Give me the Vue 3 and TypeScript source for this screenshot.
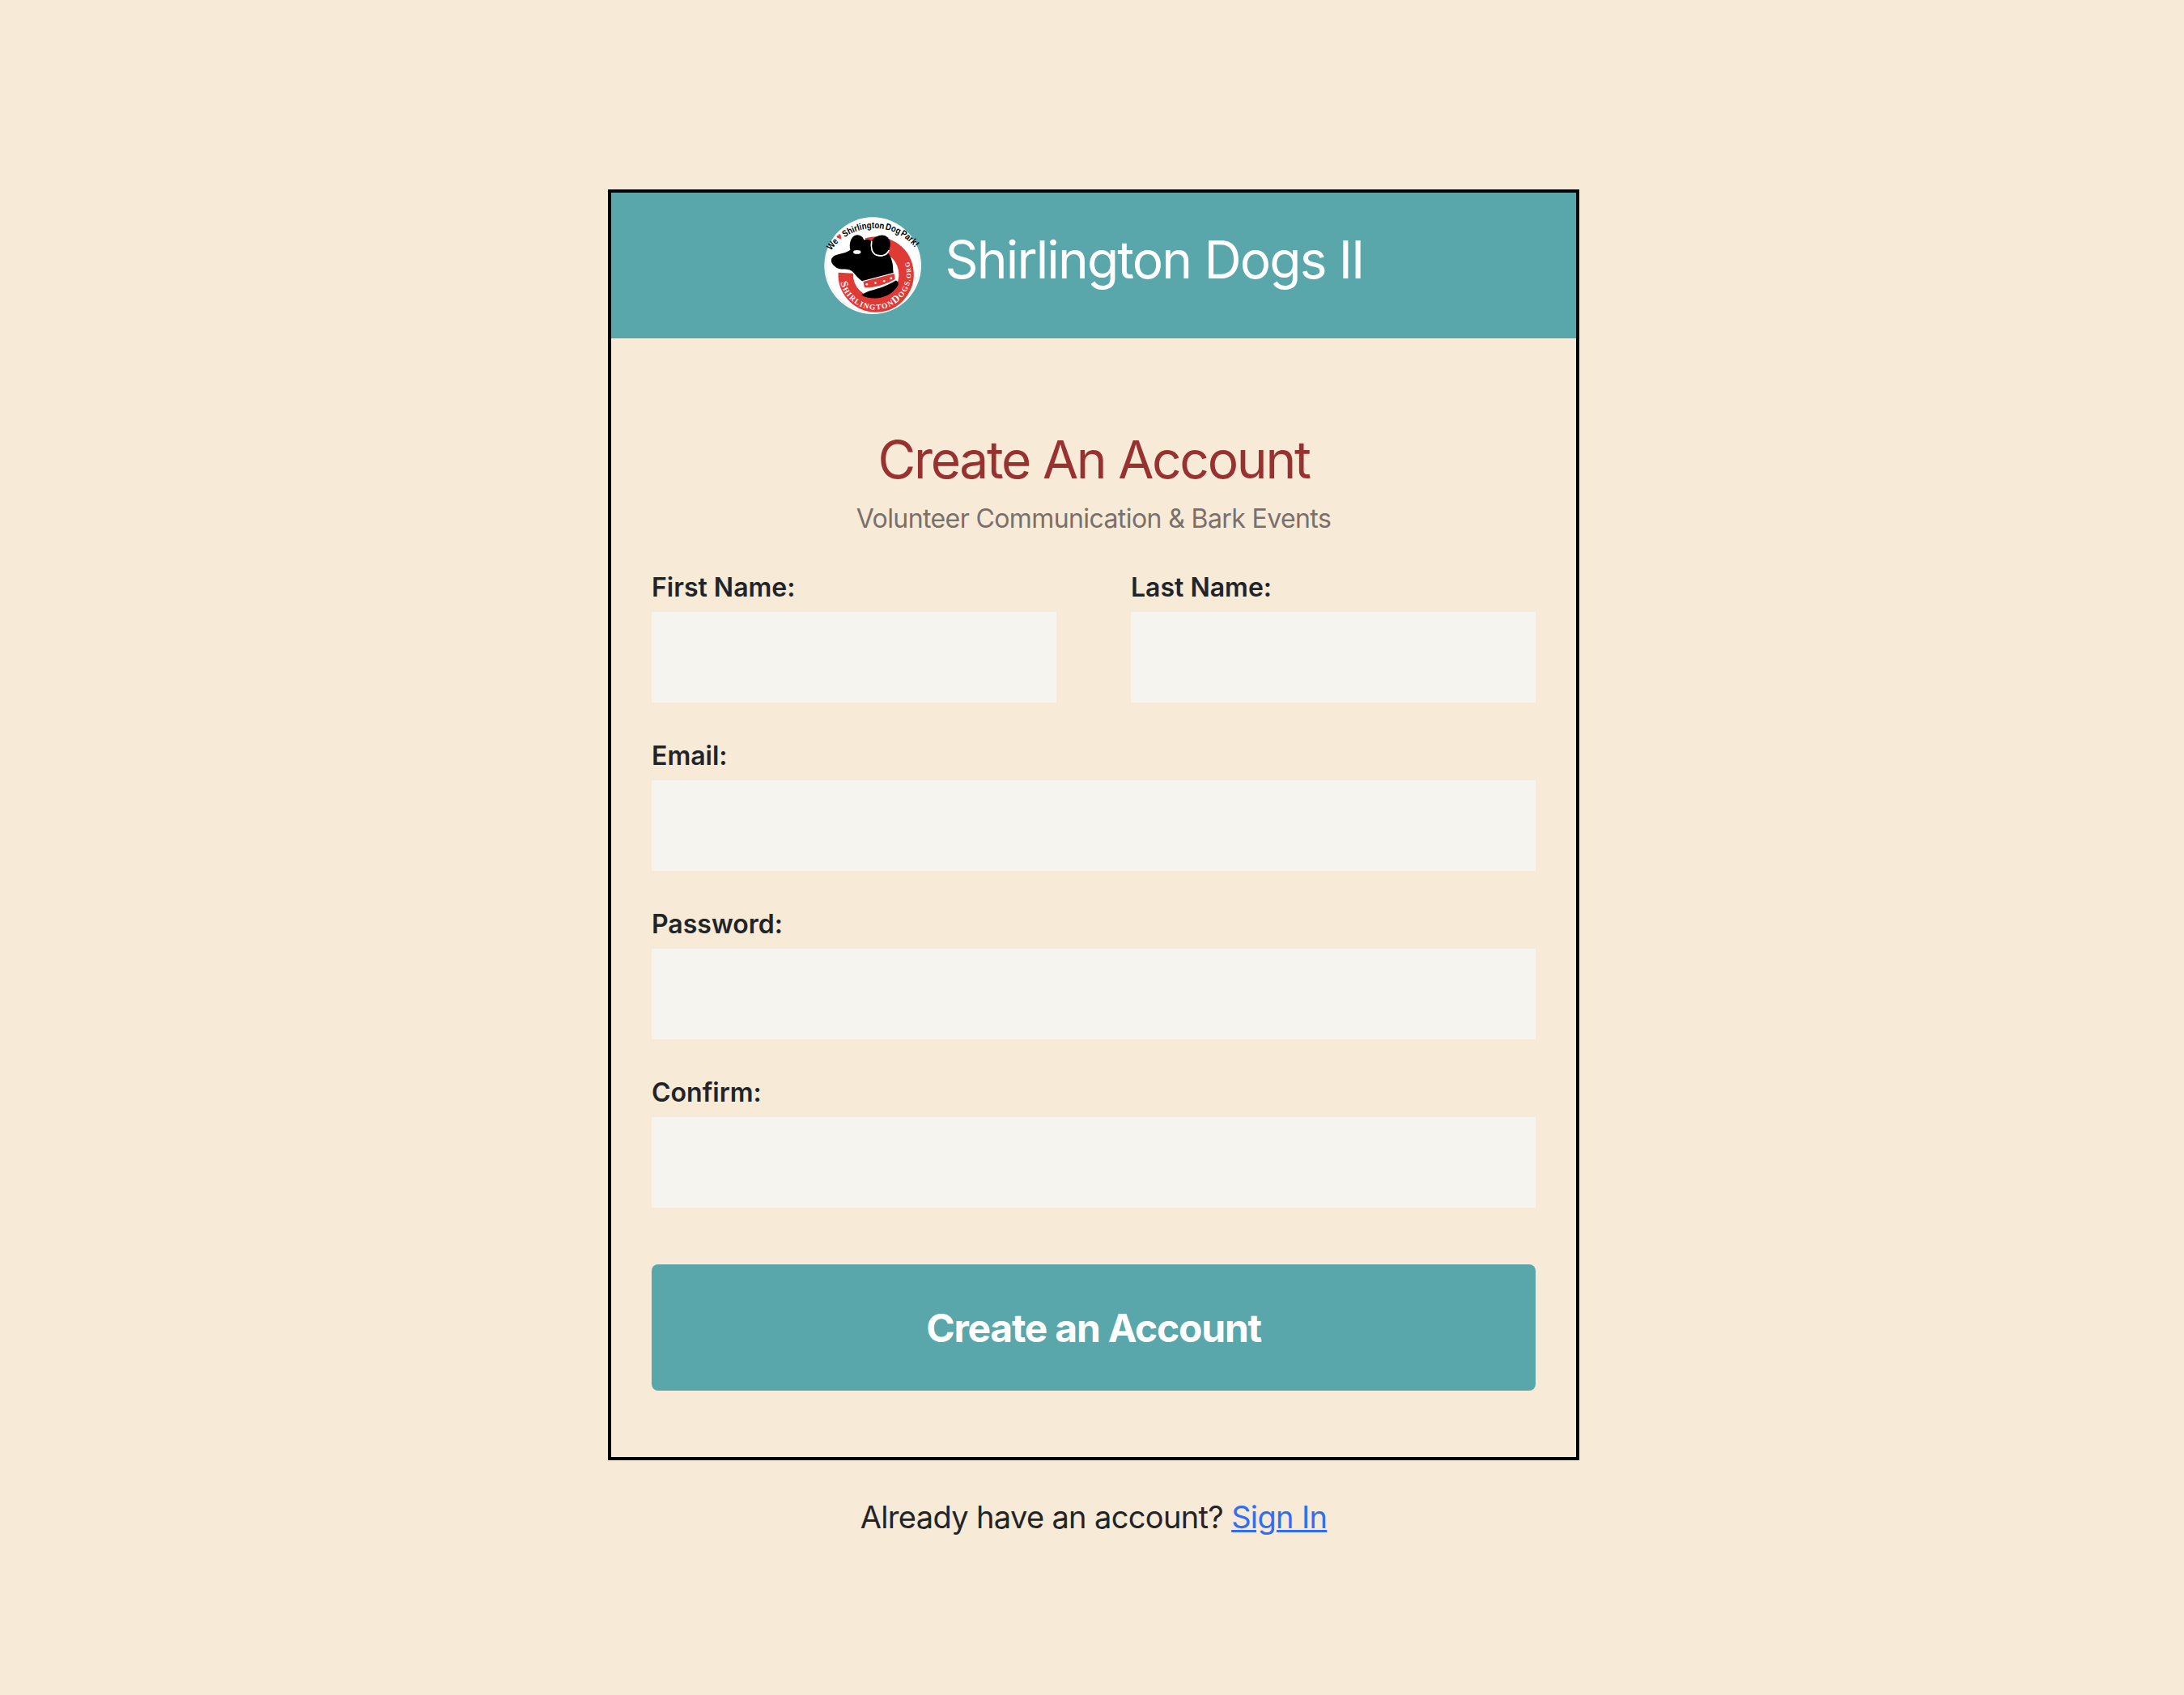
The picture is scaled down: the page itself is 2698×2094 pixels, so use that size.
<script setup lang="ts">
const nameFields: string[] = ['First Name:', 'Last Name:']
const wideFields: string[] = ['Email:', 'Password:', 'Confirm:']
</script>

<template>
  <main class="page">
    <section class="card">
      <header class="banner">
        <svg class="logo" viewBox="110 83 362 362" aria-label="Shirlington Dogs logo">
          <defs>
            <path id="topArc" d="M136 207 A195 195 0 0 1 454 207" />
            <path id="bottomArc" d="M171 325 A132 132 0 1 0 422 245" />
          </defs>
          <circle cx="290" cy="263" r="179" fill="#fff" />
          <path d="M122 222 A173 173 0 1 0 458 222" fill="none" stroke="#d8d8d8" stroke-width="1.5" />
          <path d="M190 290 A112 112 0 1 0 270 188" fill="none" stroke="#de3a36" stroke-width="55" />
          <text class="logo-top">
            <textPath href="#topArc" textLength="358" lengthAdjust="spacingAndGlyphs">We <tspan class="logo-heart">♥</tspan> Shirlington Dog Park!</textPath>
          </text>
          <text class="logo-bottom">
            <textPath href="#bottomArc" textLength="428" lengthAdjust="spacing"><tspan class="logo-cap">S</tspan>HIRLINGTON<tspan class="logo-cap">D</tspan>OGS<tspan class="logo-small">.ORG</tspan></textPath>
          </text>
          <path
            d="M137 240 C140 230 150 224 168 220 C185 216 198 212 207 205 C203 190 205 172 214 160 C222 146 242 146 252 158 L258 168 C270 166 278 166 285 172 C283 190 285 212 298 222 C312 232 335 230 348 218 C358 232 366 255 365 280 L367 292 L253 322 C238 312 228 300 220 290 C212 280 200 276 185 276 C170 276 158 274 150 266 C140 258 135 250 137 240 Z"
            fill="#000"
          />
          <path
            d="M286 172 C296 156 318 146 335 152 C352 160 358 178 353 196 C348 212 340 224 325 226 C308 228 292 222 287 206 C284 195 284 182 286 172 Z"
            fill="#000"
          />
          <path d="M286 172 C284 182 284 195 287 206 C292 222 308 228 325 226 C337 224 345 216 350 206" fill="none" stroke="#fff" stroke-width="5" />
          <ellipse cx="232" cy="213" rx="14" ry="7" fill="#fff" />
          <path d="M253 321 L370 290 L374 314 C340 335 290 348 258 345 Z" fill="#de3a36" stroke="#fff" stroke-width="3" />
          <g fill="#fff">
            <circle cx="268" cy="332" r="4" />
            <circle cx="300" cy="327" r="4" />
            <circle cx="332" cy="320" r="4" />
            <circle cx="358" cy="310" r="4" />
          </g>
          <path d="M248 372 C268 355 300 352 330 340 C350 332 365 325 375 318 C385 322 387 330 382 338 C368 362 335 384 298 384 C278 384 260 380 248 372 Z" fill="#000" />
        </svg>
        <h1 class="brand">Shirlington Dogs II</h1>
      </header>

      <form class="form" @submit.prevent>
        <h2 class="heading">Create An Account</h2>
        <p class="subheading">Volunteer Communication &amp; Bark Events</p>

        <div class="name-row">
          <label v-for="field in nameFields" :key="field" class="field">
            <span class="label">{{ field }}</span>
            <input class="input" type="text" />
          </label>
        </div>

        <label v-for="field in wideFields" :key="field" class="field">
          <span class="label">{{ field }}</span>
          <input class="input" type="text" />
        </label>

        <button class="submit" type="submit">Create an Account</button>
      </form>
    </section>

    <p class="signin">Already have an account? <a href="#" class="link">Sign In</a></p>
  </main>
</template>

<style scoped>
.page {
  box-sizing: border-box;
  min-height: 2094px;
  padding: 234px 0 0 4px;
  display: flex;
  flex-direction: column;
  align-items: center;
  background: #f7ead7;
  font-family: Inter, "Liberation Sans", sans-serif;
  color: #212529;
}

.card {
  box-sizing: border-box;
  width: 1200px;
  height: 1570px;
  border: 4px solid #000;
}

.banner {
  height: 180px;
  box-sizing: border-box;
  display: flex;
  align-items: center;
  justify-content: center;
  gap: 29px;
  background: #59a6ab;
}

.logo {
  width: 121px;
  height: 121px;
  flex: none;
}

.logo-top {
  font-family: "Liberation Sans", sans-serif;
  font-weight: 700;
  font-size: 34px;
  word-spacing: -5px;
  fill: #000;
}

.logo-heart {
  fill: #de3a36;
  font-size: 38px;
}

.logo-bottom {
  font-family: "Liberation Serif", serif;
  font-weight: 700;
  font-size: 28px;
  fill: #fff;
}

.logo-cap {
  font-size: 38px;
}

.logo-small {
  font-size: 24px;
}

.brand {
  margin: 0 0 14px;
  font-size: 64px;
  font-weight: 400;
  line-height: 72px;
  letter-spacing: -1.85px;
  color: #fff;
}

.form {
  display: flex;
  flex-direction: column;
  padding: 110px 50px 0;
}

.heading {
  margin: 0;
  font-size: 64px;
  font-weight: 400;
  line-height: 80px;
  letter-spacing: -2.25px;
  text-align: center;
  color: #983230;
}

.subheading {
  margin: 9px 0 0;
  font-size: 32px;
  line-height: 48px;
  letter-spacing: -0.6px;
  text-align: center;
  color: #7a6f6b;
}

.name-row {
  display: flex;
  gap: 92px;
  margin-top: 37px;
}

.name-row .field {
  flex: 1;
  margin-top: 0;
}

.field {
  display: flex;
  flex-direction: column;
  margin-top: 42px;
}

.label {
  font-size: 32px;
  font-weight: 600;
  line-height: 48px;
  margin-bottom: 6px;
}

.input {
  box-sizing: border-box;
  display: block;
  width: 100%;
  height: 112px;
  border: 0;
  padding: 0;
  background: #f5f4ee;
}

.submit {
  height: 156px;
  margin-top: 70px;
  border: 0;
  border-radius: 8px;
  background: #59a6ab;
  color: #fff;
  font-family: inherit;
  font-size: 48px;
  font-weight: 700;
  letter-spacing: -1.25px;
}

.signin {
  margin: 48px 0 0;
  font-size: 38px;
  line-height: 44px;
  letter-spacing: -0.65px;
}

.link {
  color: #2f6ef5;
}
</style>

<style>
body {
  background: #f7ead7;
}
</style>
